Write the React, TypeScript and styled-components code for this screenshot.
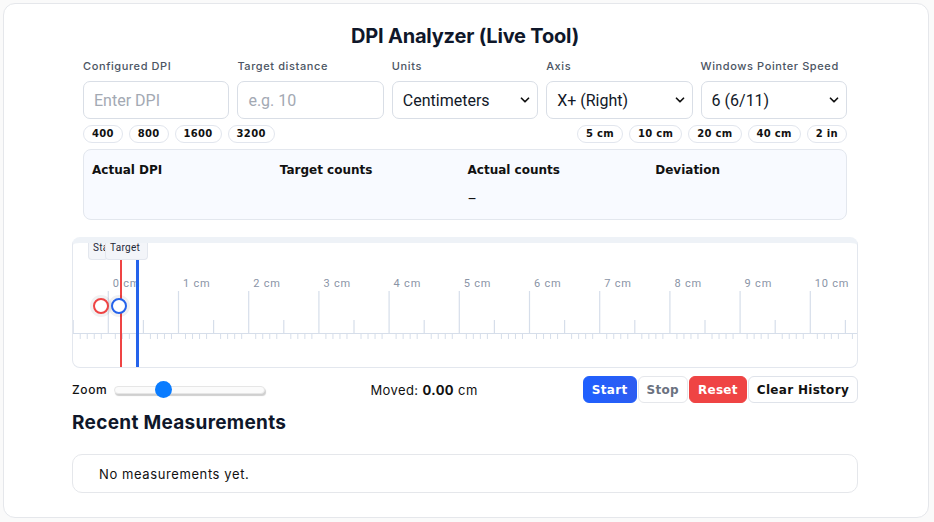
import React, { useState } from 'react';
import styled, { createGlobalStyle } from 'styled-components';
import { ChevronDown } from 'lucide-react';

const GlobalStyle = createGlobalStyle`
  html, body {
    margin: 0;
    padding: 0;
    background: #fafafa;
  }
  body {
    font-family: Roboto, "Liberation Sans", sans-serif;
    color: #111827;
  }
  * { box-sizing: border-box; }
`;

const CM = 70.2;
const ZERO_X = 35.3;

const dpiPresets = ['400', '800', '1600', '3200'];
const distPresets = ['5 cm', '10 cm', '20 cm', '40 cm', '2 in'];
const stats = [
    { label: 'Actual DPI', value: '' },
    { label: 'Target counts', value: '' },
    { label: 'Actual counts', value: '–' },
    { label: 'Deviation', value: '' },
];

export default function App() {
    const [zoom, setZoom] = useState(30);
    const [dpi, setDpi] = useState('');
    const [distance, setDistance] = useState('');

    const majors = Array.from({ length: 11 }, (_, i) => i);
    const halves = Array.from({ length: 12 }, (_, i) => i - 0.5);
    const smalls: number[] = [];
    for (let t = -5; t <= 106; t++) {
        if (t % 5 !== 0) smalls.push(t / 10);
    }

    return (
        <>
            <GlobalStyle />
            <Card>
                <Title>DPI Analyzer (Live Tool)</Title>

                <Form>
                    <FieldGrid>
                        <Field>
                            <Label>Configured DPI</Label>
                            <Input placeholder="Enter DPI" value={dpi} onChange={e => setDpi(e.target.value)} />
                        </Field>
                        <Field>
                            <Label>Target distance</Label>
                            <Input placeholder="e.g. 10" value={distance} onChange={e => setDistance(e.target.value)} />
                        </Field>
                        <Field>
                            <Label>Units</Label>
                            <SelectWrap>
                                <Select defaultValue="cm">
                                    <option value="cm">Centimeters</option>
                                    <option value="in">Inches</option>
                                </Select>
                                <Chevron size={14} strokeWidth={3} />
                            </SelectWrap>
                        </Field>
                        <Field>
                            <Label>Axis</Label>
                            <SelectWrap>
                                <Select defaultValue="x+">
                                    <option value="x+">X+ (Right)</option>
                                    <option value="x-">X- (Left)</option>
                                </Select>
                                <Chevron size={14} strokeWidth={3} />
                            </SelectWrap>
                        </Field>
                        <Field>
                            <Label>Windows Pointer Speed</Label>
                            <SelectWrap>
                                <Select defaultValue="6">
                                    <option value="6">6 (6/11)</option>
                                </Select>
                                <Chevron size={14} strokeWidth={3} />
                            </SelectWrap>
                        </Field>
                    </FieldGrid>

                    <ChipRow>
                        <ChipGroup>
                            {dpiPresets.map(p => (
                                <Chip key={p} onClick={() => setDpi(p)}>{p}</Chip>
                            ))}
                        </ChipGroup>
                        <ChipGroup>
                            {distPresets.map(p => (
                                <Chip key={p}>{p}</Chip>
                            ))}
                        </ChipGroup>
                    </ChipRow>

                    <StatsBox>
                        {stats.map(s => (
                            <Stat key={s.label}>
                                <StatLabel>{s.label}</StatLabel>
                                <StatValue>{s.value}</StatValue>
                            </Stat>
                        ))}
                    </StatsBox>
                </Form>

                <Ruler>
                    <svg width="784" height="124" viewBox="0 0 784 124">
                        <line x1="0" y1="90.5" x2="784" y2="90.5" stroke="#d6deea" strokeWidth="1" />
                        {majors.map(m => {
                            const x = ZERO_X + m * CM;
                            return (
                                <g key={m}>
                                    <line x1={x} y1="48" x2={x} y2="90" stroke="#d6deea" strokeWidth="1.2" />
                                    <text
                                        x={x + 4.5}
                                        y="44"
                                        fontSize="11"
                                        fill="#8a94a6"
                                        letterSpacing="0.8"
                                        fontFamily="Roboto, 'Liberation Sans', sans-serif"
                                    >
                                        {m} cm
                                    </text>
                                </g>
                            );
                        })}
                        {halves.map(h => {
                            const x = ZERO_X + h * CM;
                            return <line key={h} x1={x} y1="77" x2={x} y2="90" stroke="#d6deea" strokeWidth="1.2" />;
                        })}
                        {smalls.map(s => {
                            const x = ZERO_X + s * CM;
                            if (x < 0 || x > 784) return null;
                            return <line key={s} x1={x} y1="91" x2={x} y2="96" stroke="#d6deea" strokeWidth="1" />;
                        })}
                    </svg>

                    <Tag $left={15} $width={20}>Start</Tag>
                    <Tag $left={32} $width={43}>Target</Tag>
                    <Marker $left={47} $width={2} $color="#ef4444" />
                    <Marker $left={63} $width={3} $color="#2563eb" />
                    <Handle $left={28} $color="#ef4444" />
                    <Handle $left={45.5} $color="#2563eb" />
                </Ruler>

                <Controls>
                    <ZoomGroup>
                        <ZoomLabel>Zoom</ZoomLabel>
                        <Range
                            type="range"
                            min={0}
                            max={100}
                            value={zoom}
                            onChange={e => setZoom(Number(e.target.value))}
                        />
                    </ZoomGroup>
                    <Moved>
                        Moved: <b>0.00</b> cm
                    </Moved>
                    <ButtonGroup>
                        <ActionButton $variant="primary">Start</ActionButton>
                        <ActionButton $variant="muted">Stop</ActionButton>
                        <ActionButton $variant="danger">Reset</ActionButton>
                        <ActionButton $variant="plain">Clear History</ActionButton>
                    </ButtonGroup>
                </Controls>

                <SectionTitle>Recent Measurements</SectionTitle>
                <HistoryBox>No measurements yet.</HistoryBox>
            </Card>
        </>
    );
}

const Card = styled.div`
  margin: 3px 5px 4px 3px;
  height: 515px;
  background: #fff;
  border: 1px solid #e5e7eb;
  border-radius: 12px;
  padding: 18px 70px 0 68px;
  display: flex;
  flex-direction: column;
`;

const Title = styled.h1`
  margin: 0;
  text-align: center;
  font-family: Inter, "Noto Sans", sans-serif;
  font-size: 20px;
  font-weight: 700;
  line-height: 28px;
  color: #0f172a;
  letter-spacing: -0.2px;
`;

const Form = styled.div`
  padding: 0 11px;
  margin-top: 9px;
  display: flex;
  flex-direction: column;
`;

const FieldGrid = styled.div`
  display: grid;
  grid-template-columns: repeat(5, 1fr);
  gap: 8px;
`;

const Field = styled.label`
  display: flex;
  flex-direction: column;
  gap: 8px;
`;

const Label = styled.span`
  font-family: Inter, "Noto Sans", sans-serif;
  font-size: 11px;
  line-height: 14px;
  font-weight: 500;
  letter-spacing: 0.6px;
  color: #4b5563;
`;

const Input = styled.input`
  height: 38px;
  width: 100%;
  border: 1px solid #d9dee6;
  border-radius: 7px;
  padding: 0 10px;
  font-family: Roboto, "Liberation Sans", sans-serif;
  font-size: 16px;
  color: #111827;
  background: #fff;
  outline: none;
  &::placeholder {
    color: #a3a9b3;
  }
`;

const SelectWrap = styled.div`
  position: relative;
`;

const Select = styled.select`
  appearance: none;
  height: 38px;
  width: 100%;
  border: 1px solid #d9dee6;
  border-radius: 7px;
  padding: 0 10px;
  font-family: Roboto, "Liberation Sans", sans-serif;
  font-size: 16px;
  color: #111827;
  background: #fff;
  outline: none;
`;

const Chevron = styled(ChevronDown)`
  position: absolute;
  right: 6px;
  top: 12px;
  color: #111;
  pointer-events: none;
`;

const ChipRow = styled.div`
  display: flex;
  justify-content: space-between;
  margin-top: 6px;
`;

const ChipGroup = styled.div`
  display: flex;
  gap: 6px;
`;

const Chip = styled.button`
  height: 18px;
  padding: 0 8px;
  border: 1px solid #e2e6ee;
  border-radius: 999px;
  background: #fff;
  font-family: "DejaVu Sans", Verdana, sans-serif;
  font-size: 10px;
  font-weight: 700;
  letter-spacing: 0.3px;
  color: #111;
  line-height: 16px;
`;

const StatsBox = styled.div`
  margin-top: 6px;
  height: 71px;
  background: #f8faff;
  border: 1px solid #e3e7ee;
  border-radius: 8px;
  padding: 13px 9px 0 8px;
  display: grid;
  grid-template-columns: repeat(4, 1fr);
  column-gap: 6px;
`;

const Stat = styled.div`
  display: flex;
  flex-direction: column;
  gap: 13px;
`;

const StatLabel = styled.span`
  font-family: "DejaVu Sans", Verdana, sans-serif;
  font-size: 12px;
  font-weight: 700;
  line-height: 15px;
  color: #111;
`;

const StatValue = styled.span`
  font-family: Roboto, "Liberation Sans", sans-serif;
  font-size: 14px;
  line-height: 16px;
  min-height: 16px;
  color: #111;
`;

const Ruler = styled.div`
  position: relative;
  margin-top: 17px;
  height: 131px;
  flex-shrink: 0;
  border: 1px solid #e3e7ee;
  border-top: 6px solid #eef2f7;
  border-radius: 8px;
  overflow: hidden;
  background: #fff;
  svg {
    display: block;
  }
`;

const Tag = styled.div<{ $left: number; $width: number }>`
  position: absolute;
  top: -6px;
  left: ${p => p.$left}px;
  width: ${p => p.$width}px;
  height: 23px;
  overflow: hidden;
  white-space: nowrap;
  padding: 2px 4px 0;
  background: #f3f5f9;
  border: 1px solid #e3e7ee;
  border-top: none;
  border-radius: 0 0 4px 4px;
  font-family: Roboto, "Liberation Sans", sans-serif;
  font-size: 10px;
  line-height: 18px;
  letter-spacing: 0.3px;
  color: #1f2937;
`;

const Marker = styled.div<{ $left: number; $width: number; $color: string }>`
  position: absolute;
  top: 17px;
  bottom: 0;
  left: ${p => p.$left}px;
  width: ${p => p.$width}px;
  background: ${p => p.$color};
`;

const Handle = styled.div<{ $left: number; $color: string }>`
  position: absolute;
  top: 55px;
  left: ${p => p.$left - 8}px;
  width: 16px;
  height: 16px;
  border-radius: 50%;
  border: 2px solid ${p => p.$color};
  background: #fff;
  box-shadow: 0 0 0 3px rgba(15, 23, 42, 0.06);
`;

const Controls = styled.div`
  margin-top: 8px;
  display: flex;
  align-items: center;
  justify-content: space-between;
`;

const ZoomGroup = styled.div`
  display: flex;
  align-items: center;
  gap: 7px;
`;

const ZoomLabel = styled.span`
  font-family: Inter, "Noto Sans", sans-serif;
  font-size: 12px;
  font-weight: 500;
  letter-spacing: 0.6px;
  color: #111;
`;

const Range = styled.input`
  appearance: none;
  -webkit-appearance: none;
  width: 151px;
  height: 8px;
  margin: 0;
  border-radius: 5px;
  background: #fbfbfb;
  border: 1px solid #e6e6e6;
  box-shadow: 1px 2px 1px #cfcfcf;
  outline: none;
  &::-webkit-slider-thumb {
    -webkit-appearance: none;
    width: 17px;
    height: 17px;
    border-radius: 50%;
    background: #0a7cff;
    border: none;
  }
`;

const Moved = styled.span`
  font-family: Inter, "Noto Sans", sans-serif;
  font-size: 13px;
  letter-spacing: 0.4px;
  color: #111;
  b {
    font-weight: 700;
  }
`;

const ButtonGroup = styled.div`
  display: flex;
  gap: 1px;
`;

const variants = {
    primary: 'background: linear-gradient(90deg, #1f60ff, #2e5cf0); color: #fff; border-color: #2260fb;',
    muted: 'background: #fff; color: #6b7280; border-color: #e5e7eb;',
    danger: 'background: #ef4444; color: #fff; border-color: #ef4444;',
    plain: 'background: #fff; color: #111; border-color: #dfe3ea;',
};

const ActionButton = styled.button<{ $variant: keyof typeof variants }>`
  height: 27px;
  padding: 0 8px;
  border: 1px solid;
  border-radius: 6px;
  font-family: "DejaVu Sans", Verdana, sans-serif;
  font-size: 12px;
  font-weight: 700;
  letter-spacing: 0.3px;
  ${p => variants[p.$variant]}
`;

const SectionTitle = styled.h2`
  margin: 8px 0 0;
  font-family: Inter, "Noto Sans", sans-serif;
  font-size: 19px;
  font-weight: 700;
  line-height: 24px;
  letter-spacing: 0.3px;
  color: #0f172a;
`;

const HistoryBox = styled.div`
  margin-top: 19px;
  height: 39px;
  flex-shrink: 0;
  border: 1px solid #e5e7eb;
  border-radius: 10px;
  padding: 0 26px;
  display: flex;
  align-items: center;
  font-family: Inter, "Noto Sans", sans-serif;
  font-size: 13px;
  letter-spacing: 0.6px;
  color: #111;
`;
